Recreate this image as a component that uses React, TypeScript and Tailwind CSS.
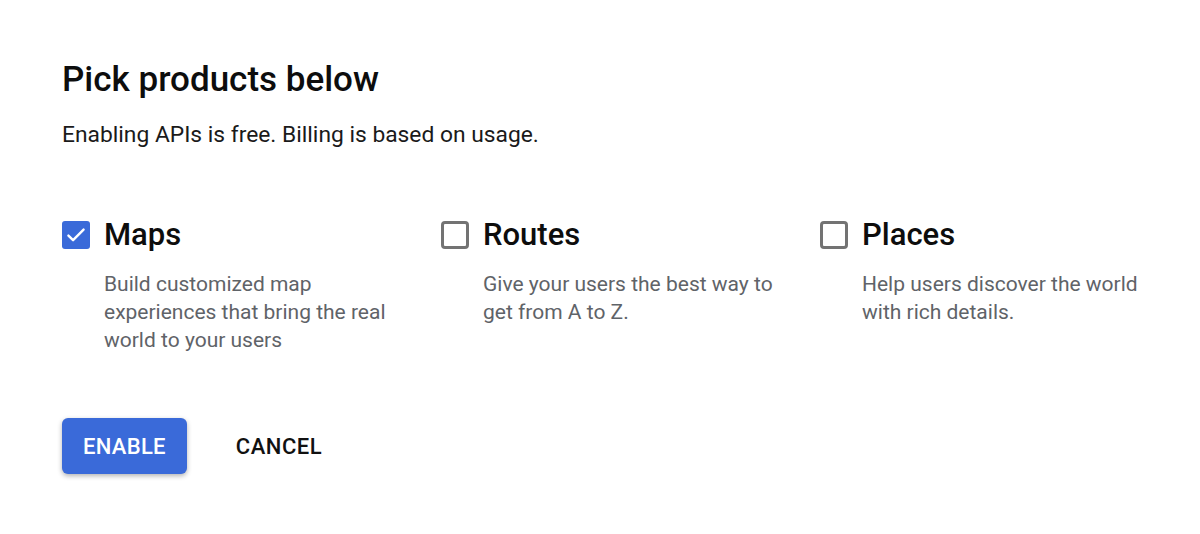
import React, { useState } from "react";

interface ProductOptionProps {
  name: string;
  description: string;
  checked: boolean;
  onToggle: () => void;
}

const ProductOption: React.FC<ProductOptionProps> = ({
  name,
  description,
  checked,
  onToggle,
}) => {
  return (
    <div className="w-[379px] shrink-0">
      <label className="flex items-center gap-[14px] cursor-pointer" onClick={onToggle}>
        {checked ? (
          <span className="flex items-center justify-center w-[28px] h-[28px] rounded-[3px] bg-[#3a6ad9]">
            <svg viewBox="0 0 24 24" className="w-[26px] h-[26px]" fill="none">
              <path
                d="M5 12.5l4.3 4.3L19 7"
                stroke="#ffffff"
                strokeWidth="2.2"
                strokeLinecap="round"
                strokeLinejoin="round"
              />
            </svg>
          </span>
        ) : (
          <span className="block w-[28px] h-[28px] rounded-[4px] border-[3px] border-[#737373] bg-white" />
        )}
        <span className="text-[31px] font-medium text-[#0d0d0d] leading-[36px]">{name}</span>
      </label>
      <p className="mt-[17px] ml-[42px] max-w-[305px] text-[21px] leading-[28px] text-[#5f6368]">
        {description}
      </p>
    </div>
  );
};

export default function App() {
  const [selected, setSelected] = useState<Record<string, boolean>>({
    Maps: true,
    Routes: false,
    Places: false,
  });

  const products = [
    { name: "Maps", description: "Build customized map experiences that bring the real world to your users" },
    { name: "Routes", description: "Give your users the best way to get from A to Z." },
    { name: "Places", description: "Help users discover the world with rich details." },
  ];

  return (
    <div className="min-h-[534px] w-[1200px] bg-white px-[62px] pt-[59px] font-['Roboto',sans-serif] text-[#0d0d0d]">
      <h1 className="text-[35px] font-medium leading-[42px]">Pick products below</h1>
      <p className="mt-[20px] text-[22.8px] leading-[28px] text-[#1a1a1a]">
        Enabling APIs is free. Billing is based on usage.
      </p>

      <div className="flex mt-[68px]">
        {products.map((p) => (
          <ProductOption
            key={p.name}
            name={p.name}
            description={p.description}
            checked={selected[p.name]}
            onToggle={() => setSelected((s) => ({ ...s, [p.name]: !s[p.name] }))}
          />
        ))}
      </div>

      <div className="flex items-center gap-[49px] mt-[64px]">
        <button className="h-[56px] px-[21px] rounded-[6px] bg-[#3a6ad9] text-white text-[22px] font-medium tracking-[0.3px] shadow-[0_2px_5px_rgba(0,0,0,0.3)]">
          ENABLE
        </button>
        <button className="text-[22px] font-medium text-[#111] tracking-[0.5px]">CANCEL</button>
      </div>
    </div>
  );
}
